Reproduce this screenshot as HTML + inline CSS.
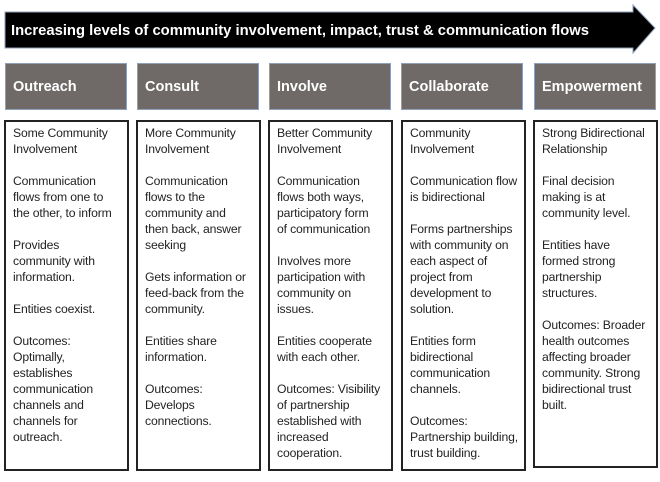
<!DOCTYPE html>
<html><head><meta charset="utf-8"><style>
body{margin:0;width:660px;height:482px;background:#fff;position:relative;overflow:hidden;font-family:"Liberation Sans",sans-serif}
.hd{position:absolute;top:63px;height:47px;width:122px;background:#6f6a68;border:1px solid #8fa0b8;box-sizing:border-box;color:#fff;font-weight:bold;font-size:14.5px;line-height:47px;padding-left:7px}
.bx{position:absolute;top:120px;height:351px;width:125px;border:2px solid #222;box-sizing:border-box;font-size:12.2px;line-height:16px;color:#222;padding:3px 0 0 7px;white-space:nowrap;letter-spacing:-0.15px}
</style></head><body>
<svg style="position:absolute;left:0;top:0" width="660" height="60">
<polygon points="5,12 633,12 633,5 655,28 633,53 633,48 5,48" fill="#000" stroke="#8fa0b8" stroke-width="1"/>
<text x="11" y="35" fill="#fff" font-family="Liberation Sans" font-weight="bold" font-size="14.8">Increasing levels of community involvement, impact, trust &amp; communication flows</text>
</svg>
<div class="hd" style="left:5px">Outreach</div>
<div class="hd" style="left:137px">Consult</div>
<div class="hd" style="left:269px">Involve</div>
<div class="hd" style="left:401px">Collaborate</div>
<div class="hd" style="left:534px">Empowerment</div>
<div class="bx" style="left:4px">Some Community<br>Involvement<br><br>Communication<br>flows from one to<br>the other, to inform<br><br>Provides<br>community with<br>information.<br><br>Entities coexist.<br><br>Outcomes:<br>Optimally,<br>establishes<br>communication<br>channels and<br>channels for<br>outreach.</div>
<div class="bx" style="left:136px">More Community<br>Involvement<br><br>Communication<br>flows to the<br>community and<br>then back, answer<br>seeking<br><br>Gets information or<br>feed-back from the<br>community.<br><br>Entities share<br>information.<br><br>Outcomes:<br>Develops<br>connections.</div>
<div class="bx" style="left:268px">Better Community<br>Involvement<br><br>Communication<br>flows both ways,<br>participatory form<br>of communication<br><br>Involves more<br>participation with<br>community on<br>issues.<br><br>Entities cooperate<br>with each other.<br><br>Outcomes: Visibility<br>of partnership<br>established with<br>increased<br>cooperation.</div>
<div class="bx" style="left:401px">Community<br>Involvement<br><br>Communication flow<br>is bidirectional<br><br>Forms partnerships<br>with community on<br>each aspect of<br>project from<br>development to<br>solution.<br><br>Entities form<br>bidirectional<br>communication<br>channels.<br><br>Outcomes:<br>Partnership building,<br>trust building.</div>
<div class="bx" style="left:533px;height:348px">Strong Bidirectional<br>Relationship<br><br>Final decision<br>making is at<br>community level.<br><br>Entities have<br>formed strong<br>partnership<br>structures.<br><br>Outcomes: Broader<br>health outcomes<br>affecting broader<br>community. Strong<br>bidirectional trust<br>built.</div>
</body></html>
